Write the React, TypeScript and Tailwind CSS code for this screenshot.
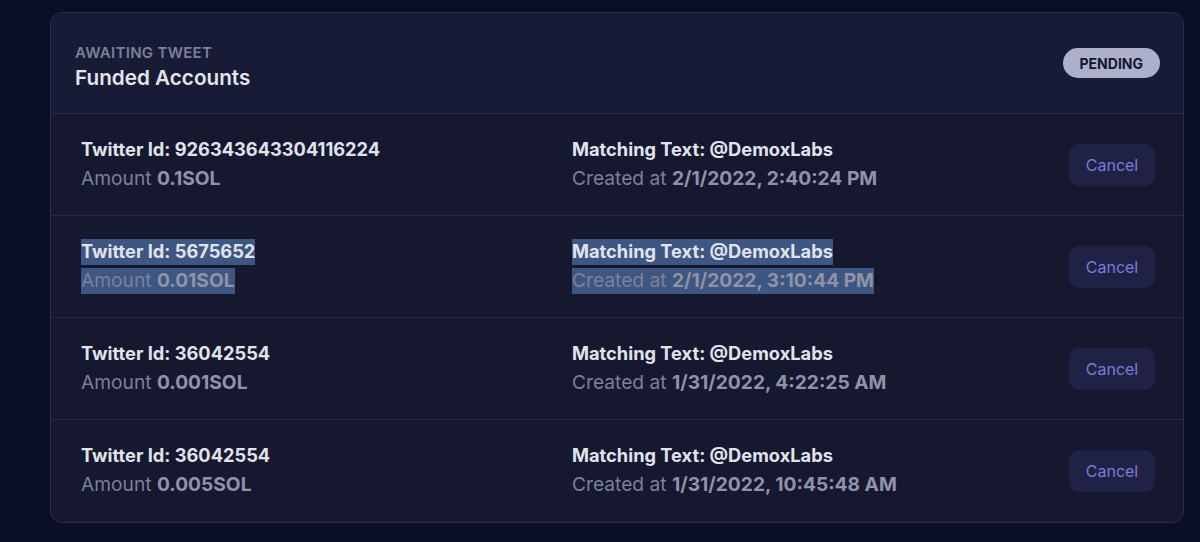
import React from "react"

const rows = [
  { id: "926343643304116224", amount: "0.1SOL", text: "@DemoxLabs", created: "2/1/2022, 2:40:24 PM", selected: false },
  { id: "5675652", amount: "0.01SOL", text: "@DemoxLabs", created: "2/1/2022, 3:10:44 PM", selected: true },
  { id: "36042554", amount: "0.001SOL", text: "@DemoxLabs", created: "1/31/2022, 4:22:25 AM", selected: false },
  { id: "36042554", amount: "0.005SOL", text: "@DemoxLabs", created: "1/31/2022, 10:45:48 AM", selected: false },
]

function Line({ sel, children }: { sel: boolean; children: React.ReactNode }) {
  return (
    <div className="leading-[28px]">
      <span className={sel ? "bg-[#3e5682] py-[3px]" : ""}>{children}</span>
    </div>
  )
}

export default function App() {
  return (
    <div
      className="w-[1200px] h-[542px] bg-[#0b0e27] pl-[50px] pr-[16px] pt-[12px] overflow-hidden"
      style={{ fontFamily: "Inter, 'Noto Sans', sans-serif" }}
    >
      <div className="rounded-[12px] border border-[#2b2f4b] bg-[#15182f] overflow-hidden">
        <div className="h-[101px] flex items-center justify-between pl-[24px] pr-[23px] bg-[#181b35] border-b border-[#2a2e49]">
          <div className="flex flex-col pt-[9px]">
            <span className="text-[15px] leading-[20px] font-semibold tracking-[0.3px] text-[#7c8098] uppercase">Awaiting Tweet</span>
            <span className="text-[20.7px] leading-[30px] font-semibold text-[#e3e5ee]">Funded Accounts</span>
          </div>
          <span className="h-[30px] px-[17px] rounded-full bg-[#adb0cb] text-[#14172c] text-[14px] font-bold flex items-center">PENDING</span>
        </div>
        {rows.map((r, i) => (
          <div
            key={i}
            className={`h-[102px] flex items-center pl-[30px] pr-[28px] ${i < rows.length - 1 ? "border-b border-[#262a45]" : ""}`}
          >
            <div className="w-[491px] mb-[2px]">
              <Line sel={r.selected}>
                <span className="text-[18.25px] font-bold text-[#e1e3ec]">Twitter Id: {r.id}</span>
              </Line>
              <Line sel={r.selected}>
                <span className="text-[19.2px] text-[#7c8099]">Amount </span>
                <span className="text-[19.2px] font-bold text-[#9093a8]">{r.amount}</span>
              </Line>
            </div>
            <div className="flex-1 mb-[2px]">
              <Line sel={r.selected}>
                <span className="text-[18.25px] font-bold text-[#e1e3ec]">Matching Text: {r.text}</span>
              </Line>
              <Line sel={r.selected}>
                <span className="text-[19.2px] text-[#7c8099]">Created at </span>
                <span className="text-[19.2px] font-bold text-[#9093a8]">{r.created}</span>
              </Line>
            </div>
            <button className="w-[86px] h-[42px] rounded-[10px] bg-[#1f2145] text-[#7e7ad9] text-[16px]">Cancel</button>
          </div>
        ))}
      </div>
    </div>
  )
}
